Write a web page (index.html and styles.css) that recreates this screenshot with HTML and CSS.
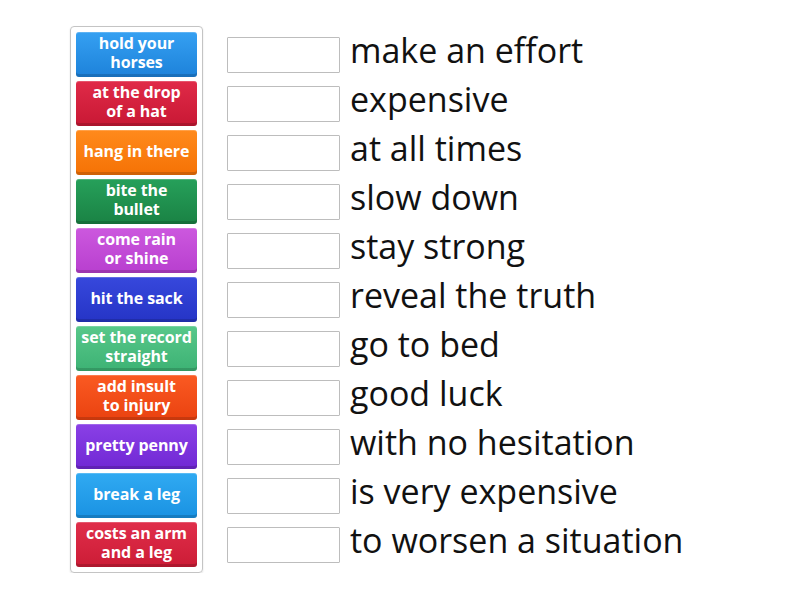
FILE: index.html
```html
<!DOCTYPE html>
<html>
<head>
<meta charset="utf-8">
<link rel="stylesheet" href="styles.css">
</head>
<body>
<div class="game">
  <div class="bank">
    <div class="tile c1">hold your<br>horses</div>
    <div class="tile c2">at the drop<br>of a hat</div>
    <div class="tile c3">hang in there</div>
    <div class="tile c4">bite the<br>bullet</div>
    <div class="tile c5">come rain<br>or shine</div>
    <div class="tile c6">hit the sack</div>
    <div class="tile c7">set the record<br>straight</div>
    <div class="tile c8">add insult<br>to injury</div>
    <div class="tile c9">pretty penny</div>
    <div class="tile c10">break a leg</div>
    <div class="tile c11">costs an arm<br>and a leg</div>
  </div>
  <div class="targets">
    <div class="row"><div class="slot"></div><div class="def">make an effort</div></div>
    <div class="row"><div class="slot"></div><div class="def">expensive</div></div>
    <div class="row"><div class="slot"></div><div class="def">at all times</div></div>
    <div class="row"><div class="slot"></div><div class="def">slow down</div></div>
    <div class="row"><div class="slot"></div><div class="def">stay strong</div></div>
    <div class="row"><div class="slot"></div><div class="def">reveal the truth</div></div>
    <div class="row"><div class="slot"></div><div class="def">go to bed</div></div>
    <div class="row"><div class="slot"></div><div class="def">good luck</div></div>
    <div class="row"><div class="slot"></div><div class="def">with no hesitation</div></div>
    <div class="row"><div class="slot"></div><div class="def">is very expensive</div></div>
    <div class="row"><div class="slot"></div><div class="def">to worsen a situation</div></div>
  </div>
</div>
</body>
</html>
```
FILE: styles.css
```css
html, body {
  margin: 0;
  padding: 0;
  background: #fff;
  font-family: "Open Sans", "Liberation Sans", sans-serif;
}
.game {
  display: flex;
  align-items: flex-start;
  padding: 26px 0 0 70px;
}
.bank {
  width: 121px;
  border: 1px solid #c4c4c4;
  border-radius: 4px;
  padding: 5px;
  display: flex;
  flex-direction: column;
  gap: 4px;
  box-shadow: 0 1px 2px rgba(0,0,0,0.12);
}
.tile {
  height: 45px;
  box-sizing: border-box;
  border-radius: 3px;
  color: #fff;
  font-weight: 700;
  font-size: 16px;
  line-height: 19px;
  text-align: center;
  display: flex;
  align-items: center;
  justify-content: center;
  padding: 0 1px 3px;
  letter-spacing: -0.1px;
  white-space: nowrap;
  box-shadow: inset 0 -3px 0 rgba(0,0,0,0.15), inset 0 1px 0 rgba(255,255,255,0.2);
}
.c1 { background: linear-gradient(#35a0f2, #1d82da); }
.c2 { background: linear-gradient(#e02a48, #c81834); }
.c3 { background: linear-gradient(#ff8a1c, #f57205); }
.c4 { background: linear-gradient(#26a05a, #1a8244); }
.c5 { background: linear-gradient(#cc58de, #b83fcf); }
.c6 { background: linear-gradient(#3748dc, #2534c6); }
.c7 { background: linear-gradient(#58c88a, #3db274); }
.c8 { background: linear-gradient(#fa5a22, #ea4210); }
.c9 { background: linear-gradient(#8a40e6, #7028d4); }
.c10 { background: linear-gradient(#30aaf2, #1a92e2); }
.c11 { background: linear-gradient(#e02e4a, #cc1c36); }
.targets {
  display: flex;
  flex-direction: column;
  gap: 4px;
  padding-top: 6px;
  margin-left: 24px;
}
.row {
  height: 45px;
  display: flex;
  align-items: center;
}
.slot {
  width: 113px;
  height: 36px;
  box-sizing: border-box;
  border: 1px solid #bdbdbd;
  border-radius: 1px;
  background: #fff;
  flex: none;
}
.def {
  margin-left: 10px;
  font-size: 34px;
  color: #111;
  white-space: nowrap;
  line-height: 1;
  margin-top: -9px;
}
```
